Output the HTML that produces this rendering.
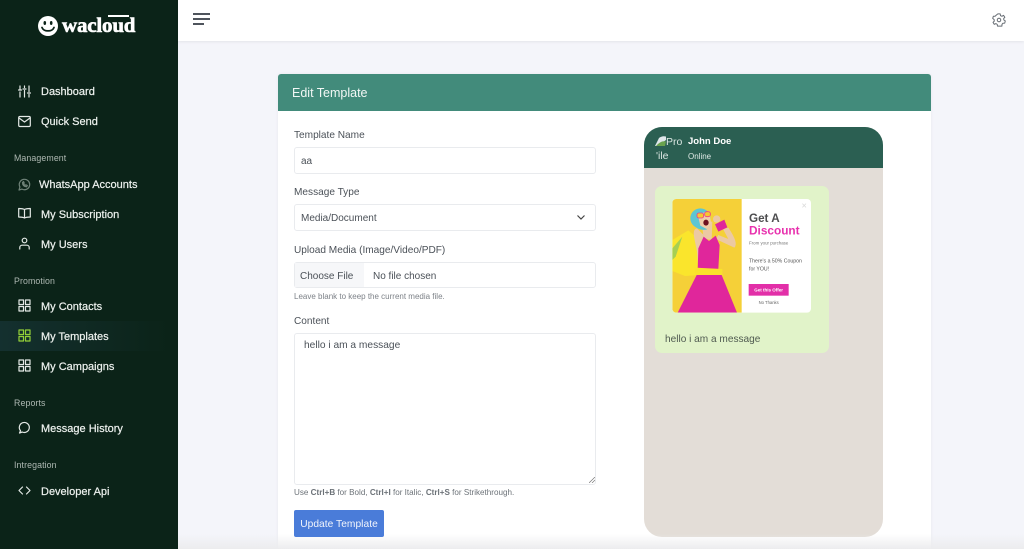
<!DOCTYPE html>
<html><head><meta charset="utf-8"><style>
*{box-sizing:border-box}
html,body{margin:0;width:1024px;height:549px;overflow:hidden;background:#f4f5fa;font-family:"Liberation Sans",sans-serif;color:#495057}
#w{position:relative;width:1024px;height:549px;overflow:hidden}
.a{position:absolute;white-space:nowrap}
#side{position:absolute;left:0;top:0;width:178px;height:549px;background:#0b2318}
.it{position:absolute;left:41px;font-size:11px;line-height:14px;color:#eef2ef;-webkit-text-stroke:.2px #eef2ef;white-space:nowrap}
.lb{position:absolute;left:14px;font-size:8.800px;line-height:12px;color:#aeb8b2;letter-spacing:.1px;white-space:nowrap}
.ic{position:absolute;left:18px;width:13px;height:13px;fill:none;stroke:#e4e9e6;stroke-width:1.200;stroke-linecap:round;stroke-linejoin:round}
.f{position:absolute;left:294px;width:302px;background:#fff;border:1px solid #e9ebee;border-radius:3px}
.t{position:absolute;font-size:10.100px;line-height:13px;color:#4b5158;white-space:nowrap}
</style></head><body><div id="w">
<div id="side">
<svg class="a" style="left:38px;top:16px" width="20" height="20" viewBox="0 0 20 20"><circle cx="10" cy="10" r="10" fill="#fff"/><ellipse cx="6.800" cy="7" rx="1.300" ry="2" fill="#0b2318"/><ellipse cx="13.200" cy="7" rx="1.300" ry="2" fill="#0b2318"/><path d="M4 11.500c1.500 4.500 10.500 4.500 12 0" fill="none" stroke="#0b2318" stroke-width="1.800" stroke-linecap="round"/></svg>
<div class="a" style="left:62px;top:13px;font:bold 21px/24px 'Liberation Serif',serif;color:#fff;-webkit-text-stroke:.6px #fff;letter-spacing:-.2px">wacloud</div>
<div class="a" style="left:108px;top:15px;width:21px;height:2px;background:#fff"></div>

<svg class="ic" style="top:85px" viewBox="0 0 13 13"><path d="M2 1v3.500M2 7v5M6.500 1v1.500M6.500 5.500V12M11 1v5.500M11 9.500V12M.5 5h3M5 4h3M9.500 8h3"/></svg>
<div class="it" style="top:85px">Dashboard</div>
<svg class="ic" style="top:115px" viewBox="0 0 13 13"><rect x=".7" y="1.500" width="11.600" height="10" rx="1.200"/><path d="M1 3l5.500 4L12 3"/></svg>
<div class="it" style="top:115px">Quick Send</div>
<div class="lb" style="top:152px">Management</div>
<svg class="ic" style="top:178px;left:18px;stroke:#6f8278" viewBox="0 0 13 13"><path d="M1 12l.9-3A5.200 5.200 0 1 1 4 11.100z"/><path d="M4.500 4.500c0 2.500 1.500 4 4 4.300l.8-1.300-1.500-.7-.6.600c-.8-.4-1.300-1-1.600-1.700l.6-.6-.6-1.500z"/></svg>
<div class="it" style="top:178px;left:39px">WhatsApp Accounts</div>
<svg class="ic" style="top:207px" viewBox="0 0 13 13"><path d="M6.500 2.500C5 1.700 3 1.500.7 1.500v8.500c2.300 0 4.300.2 5.800 1 1.500-.8 3.500-1 5.800-1V1.500c-2.300 0-4.300.2-5.800 1zM6.500 2.500V11"/></svg>
<div class="it" style="top:208px">My Subscription</div>
<svg class="ic" style="top:237px" viewBox="0 0 13 13"><circle cx="6.500" cy="3.500" r="2.300"/><path d="M1.800 12v-1.500c0-1.300 1-2.300 2.300-2.300h4.800c1.300 0 2.300 1 2.300 2.300V12"/></svg>
<div class="it" style="top:238px">My Users</div>
<div class="lb" style="top:275px">Promotion</div>
<svg class="ic" style="top:299px" viewBox="0 0 13 13"><rect x="1" y="1" width="4.500" height="4.500"/><rect x="7.500" y="1" width="4.500" height="4.500"/><rect x="1" y="7.500" width="4.500" height="4.500"/><rect x="7.500" y="7.500" width="4.500" height="4.500"/></svg>
<div class="it" style="top:300px">My Contacts</div>
<div class="a" style="left:0;top:321px;width:178px;height:30px;background:linear-gradient(90deg,#14302f,#0b2318 95%)"></div>
<svg class="ic" style="top:329px;stroke:#94d038" viewBox="0 0 13 13"><rect x="1" y="1" width="4.500" height="4.500"/><rect x="7.500" y="1" width="4.500" height="4.500"/><rect x="1" y="7.500" width="4.500" height="4.500"/><rect x="7.500" y="7.500" width="4.500" height="4.500"/></svg>
<div class="it" style="top:330px">My Templates</div>
<svg class="ic" style="top:359px" viewBox="0 0 13 13"><rect x="1" y="1" width="4.500" height="4.500"/><rect x="7.500" y="1" width="4.500" height="4.500"/><rect x="1" y="7.500" width="4.500" height="4.500"/><rect x="7.500" y="7.500" width="4.500" height="4.500"/></svg>
<div class="it" style="top:360px">My Campaigns</div>
<div class="lb" style="top:397px">Reports</div>
<svg class="ic" style="top:421px" viewBox="0 0 13 13"><path d="M1.500 12l1-2.300A5 5 0 1 1 4.200 11z"/></svg>
<div class="it" style="top:422px">Message History</div>
<div class="lb" style="top:459px">Intregation</div>
<svg class="ic" style="top:484px" viewBox="0 0 13 13"><path d="M4.500 3L1 6.500 4.500 10M8.500 3L12 6.500 8.500 10"/></svg>
<div class="it" style="top:485px">Developer Api</div>
</div>

<div class="a" style="left:178px;top:0;width:846px;height:41px;background:#fff;box-shadow:0 1px 3px rgba(0,0,0,.07)"></div>
<div class="a" style="left:193px;top:12.500px;width:17px;height:2.300px;background:#4e545c"></div>
<div class="a" style="left:193px;top:17.800px;width:17px;height:2.300px;background:#4e545c"></div>
<div class="a" style="left:193px;top:23px;width:11px;height:2.300px;background:#4e545c"></div>
<svg class="a" style="left:992px;top:13px" width="14" height="14" viewBox="0 0 24 24" fill="none" stroke="#666c73" stroke-width="1.700" stroke-linejoin="round"><circle cx="12" cy="12" r="3"/><path d="M10 1.500h4l.6 3 2.500 1.100 2.600-1.600 2.300 3.300-2 2.300.3 2.400 2.500 1.500-1 3.900-3 .1-1.700 2-.1 3H9.500l-.6-3-2.300-1.300-2.700 1.200-2.100-3.400 2.100-2.100-.2-2.500L1.200 9.300l1.100-3.800 3 .1 1.800-1.700z"/></svg>

<div class="a" style="left:278px;top:74px;width:653px;height:475px;background:#fff;border-radius:3px 3px 0 0;box-shadow:0 0 3px rgba(0,0,0,.06)"></div>
<div class="a" style="left:278px;top:74px;width:653px;height:37px;background:#428b7b;border-radius:3px 3px 0 0"></div>
<div class="a" style="left:292px;top:85px;font-size:12.500px;line-height:16px;color:#f2f7f5">Edit Template</div>

<div class="t" style="left:294px;top:129px">Template Name</div>
<div class="f" style="top:147px;height:27px"></div>
<div class="t" style="left:301px;top:155px;font-size:10px">aa</div>
<div class="t" style="left:294px;top:186px">Message Type</div>
<div class="f" style="top:204px;height:27px"></div>
<div class="t" style="left:301px;top:212px;font-size:10px">Media/Document</div>
<svg class="a" style="left:576px;top:214px" width="10" height="7" viewBox="0 0 10 7" fill="none" stroke="#444" stroke-width="1.200"><path d="M1.500 1.500L5 5l3.500-3.500"/></svg>
<div class="t" style="left:294px;top:244px">Upload Media (Image/Video/PDF)</div>
<div class="f" style="top:262px;height:26px"></div>
<div class="a" style="left:295px;top:263px;width:69px;height:24px;background:#f6f7f9"></div>
<div class="t" style="left:300px;top:270px;font-size:10px">Choose File</div>
<div class="t" style="left:373px;top:270px;font-size:10px">No file chosen</div>
<div class="t" style="left:294px;top:291px;font-size:8px;line-height:11px;color:#7d8288">Leave blank to keep the current media file.</div>
<div class="t" style="left:294px;top:315px">Content</div>
<div class="f" style="top:333px;height:152px"></div>
<div class="t" style="left:304px;top:339px;font-size:10.200px">hello i am a message</div>
<svg class="a" style="left:589px;top:477px" width="6" height="6" viewBox="0 0 6 6" stroke="#777" stroke-width=".7"><path d="M0 6l6-6M3 6l3-3"/></svg>
<div class="t" style="left:294px;top:487px;font-size:8.100px;line-height:11px;color:#6c7278">Use <b>Ctrl+B</b> for Bold, <b>Ctrl+I</b> for Italic, <b>Ctrl+S</b> for Strikethrough.</div>

<div class="a" style="left:644px;top:127px;width:239px;height:410px;background:#e3ddd7;border-radius:18px;overflow:hidden">
<div style="position:absolute;left:0;top:0;width:239px;height:41px;background:#2b5f52"></div>
</div>
<svg class="a" style="left:654px;top:135px" width="13" height="12" viewBox="0 0 13 12"><path d="M1 11L5 3Q8 .5 12 1.500L12 5 4 11z" fill="#dfe6ea"/><path d="M2 11Q7 5 12 6.500L11 11z" fill="#6aa24e"/></svg>
<div class="a" style="left:666px;top:135px;font-size:10.500px;line-height:14px;color:#dbe6e2">Pro</div>
<div class="a" style="left:656px;top:150px;width:14px;height:13px;overflow:hidden;font-size:10.500px;line-height:13px;color:#dbe6e2"><span style="position:absolute;left:0;top:0">'ile</span></div>
<div class="a" style="left:688px;top:135px;font-size:9.500px;line-height:14px;font-weight:bold;color:#fff">John Doe</div>
<div class="a" style="left:688px;top:151px;font-size:8px;line-height:11px;color:#dde8e4">Online</div>

<div class="a" style="left:655px;top:186px;width:174px;height:167px;background:#e1f3c9;border-radius:7px"></div>
<svg class="a" style="left:665px;top:195px;filter:blur(.3px)" width="150" height="122" viewBox="0 0 450 366">
<defs><clipPath id="p"><rect x="22" y="12" width="416" height="341" rx="12"/></clipPath></defs>
<rect x="22" y="12" width="416" height="341" rx="12" fill="#fff"/>
<g clip-path="url(#p)">
<rect x="22" y="12" width="208" height="341" fill="#f5d038"/>
<path d="M22 135L70 106 92 125 104 240 60 243 22 228z" fill="#fae52c"/>
<path d="M22 160L52 125 32 185 22 195z" fill="#a6cf52"/>
<path d="M88 130Q82 102 96 100L116 120 118 215 100 218 96 170z" fill="#ecc9a3"/>
<path d="M152 132L208 158Q222 145 190 98L174 102 190 132 160 120z" fill="#ecc9a3"/>
<path d="M110 80L142 80 140 135 116 130z" fill="#ecc9a3"/>
<path d="M116 125L132 138 152 122 164 150 160 222 98 225 100 160z" fill="#e0269b"/>
<path d="M88 218L172 222 172 242 92 240z" fill="#f9e22c"/>
<path d="M95 240L170 240 216 353 38 353z" fill="#e0269b"/>
<circle cx="106" cy="70" r="30" fill="#5cc6d2"/>
<path d="M84 85Q96 108 125 104L135 78 125 62 108 65z" fill="#5cc6d2"/>
<path d="M98 58L133 48 138 85 125 102 106 92z" fill="#f0cda9"/>
<rect x="96" y="54" width="20" height="15" rx="6" fill="#f7c92f" stroke="#ec3b8b" stroke-width="2.500"/>
<rect x="119" y="50" width="17" height="15" rx="6" fill="#f7c92f" stroke="#ec3b8b" stroke-width="2.500"/>
<ellipse cx="123" cy="83" rx="8" ry="9" fill="#6d1220"/>
<circle cx="155" cy="72" r="11" fill="#ecc9a3"/>
<path d="M150 88L178 74 187 97 160 110z" fill="#e0269b"/>
<text x="252" y="81" font-family="Liberation Sans" font-weight="bold" font-size="35" fill="#4e4e50">Get A</text>
<text x="252" y="118" font-family="Liberation Sans" font-weight="bold" font-size="35.500" fill="#e831ae">Discount</text>
<text x="252" y="149" font-family="Liberation Sans" font-size="13.200" fill="#777">From your purchase</text>
<text x="252" y="202" font-family="Liberation Sans" font-size="15.600" fill="#555">There's a 50% Coupon</text>
<text x="252" y="226" font-family="Liberation Sans" font-size="15.600" fill="#555">for YOU!</text>
<rect x="251" y="267" width="120" height="35" fill="#e22fa8"/>
<text x="311" y="289" text-anchor="middle" font-family="Liberation Sans" font-weight="bold" font-size="13.500" fill="#fff">Get this Offer</text>
<text x="311" y="327" text-anchor="middle" font-family="Liberation Sans" font-size="12.500" fill="#666">No Thanks</text>
<path d="M412 26l11 11M423 26l-11 11" stroke="#d8d8d8" stroke-width="2"/>
</g></svg>
<div class="a" style="left:665px;top:333px;font-size:10.100px;line-height:14px;color:#4f5a50">hello i am a message</div>

<div class="a" style="left:178px;top:534px;width:846px;height:15px;background:linear-gradient(rgba(236,236,238,0),rgba(236,236,238,1))"></div>
<div class="a" style="left:294px;top:510px;width:90px;height:27px;background:#4a7cd9;border-radius:2px;color:#f2f5fc;font-size:10.200px;line-height:29px;text-align:center;letter-spacing:.05px">Update Template</div>
</div></body></html>
